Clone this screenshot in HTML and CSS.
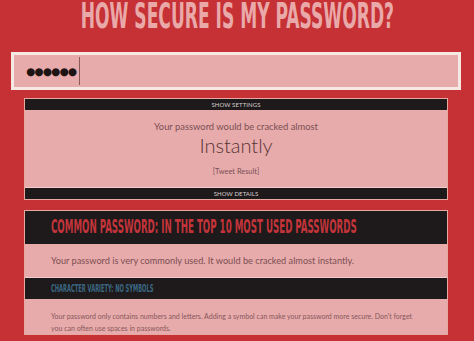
FILE: index.html
```html
<!DOCTYPE html>
<html>
<head>
<meta charset="utf-8">
<link rel="stylesheet" href="styles.css">
</head>
<body>
<h1 class="title"><span class="squeeze">HOW SECURE IS MY PASSWORD?</span></h1>
<div class="pw-box">
  <span class="dots">●●●●●●</span><span class="caret"></span>
</div>
<section class="panel result">
  <div class="bar">SHOW SETTINGS</div>
  <div class="result-body">
    <p class="lead">Your password would be cracked almost</p>
    <p class="time">Instantly</p>
    <p class="tweet">[Tweet Result]</p>
  </div>
  <div class="bar">SHOW DETAILS</div>
</section>
<section class="panel details">
  <h2 class="head-big"><span class="squeeze-left">COMMON PASSWORD: IN THE TOP 10 MOST USED PASSWORDS</span></h2>
  <p class="text-big">Your password is very commonly used. It would be cracked almost instantly.</p>
  <h3 class="head-small"><span class="squeeze-left">CHARACTER VARIETY: NO SYMBOLS</span></h3>
  <p class="text-small">Your password only contains numbers and letters. Adding a symbol can make your password more secure. Don't forget you can often use spaces in passwords.</p>
</section>
</body>
</html>
```
FILE: styles.css
```css
html, body {
  margin: 0;
  padding: 0;
}
body {
  background: #c53135;
  font-family: Lato, "Open Sans", sans-serif;
  width: 474px;
  height: 341px;
  overflow: hidden;
}
.title {
  margin: 0;
  height: 52px;
  display: flex;
  justify-content: center;
  align-items: flex-start;
  font-family: "DejaVu Sans Condensed", "DejaVu Sans", sans-serif;
  font-weight: bold;
  font-size: 22px;
  line-height: 17px;
  color: #eaa9a9;
}
.squeeze {
  display: block;
  flex: none;
  margin-top: 7px;
  transform: scale(0.864, 1.636);
  transform-origin: center;
  white-space: nowrap;
}
.squeeze-left {
  display: block;
  flex: none;
  transform-origin: left center;
  white-space: nowrap;
}
.pw-box {
  margin: 0 13px 0 11px;
  height: 32px;
  border: 3px solid #f6e9e4;
  background: #e8abab;
  display: flex;
  align-items: center;
  padding-left: 12px;
}
.dots {
  font-family: "DejaVu Sans", sans-serif;
  font-size: 10.5px;
  letter-spacing: -0.8px;
  color: #1f1414;
}
.caret {
  width: 1px;
  height: 28px;
  background: #8a5a58;
  margin-left: 3px;
}
.panel {
  margin: 0 26px 0 24px;
  border: 1px solid #e6a8a0;
  background: #e8abab;
}
.result {
  margin-top: 8px;
}
.bar {
  height: 11px;
  background: #1e1a1b;
  color: #d9cfcf;
  font-size: 6px;
  line-height: 11px;
  text-align: center;
  letter-spacing: 0.1px;
}
.result-body {
  height: 77px;
  border-bottom: 1px solid #f2cccc;
  text-align: center;
  color: #7a4f53;
}
.result-body p {
  margin: 0;
}
.lead {
  padding-top: 10px;
  font-size: 9.4px;
  line-height: 13px;
}
.time {
  font-size: 20px;
  line-height: 24px;
  font-weight: 300;
  color: #563436;
}
.tweet {
  padding-top: 10px;
  font-size: 7.4px;
  line-height: 10px;
}
.details {
  margin-top: 10px;
}
.head-big {
  margin: 0;
  height: 33px;
  background: #1e1a1b;
  padding-left: 26px;
  display: flex;
  align-items: center;
  font-family: "DejaVu Sans Condensed", "DejaVu Sans", sans-serif;
  font-weight: bold;
  font-size: 11px;
  line-height: 12px;
  color: #c3343a;
}
.head-big .squeeze-left {
  margin-top: 1px;
  transform: scale(0.877, 1.727);
}
.text-big {
  margin: 0;
  height: 33px;
  padding-left: 26px;
  border-bottom: 1px solid #f2cccc;
  font-size: 9.2px;
  line-height: 33px;
  color: #7b4e52;
}
.head-small {
  margin: 0;
  height: 21px;
  background: #1e1a1b;
  padding-left: 26px;
  display: flex;
  align-items: center;
  font-family: "DejaVu Sans Condensed", "DejaVu Sans", sans-serif;
  font-weight: bold;
  font-size: 11px;
  line-height: 12px;
  color: #3b6883;
}
.head-small .squeeze-left {
  transform: scaleX(0.52);
}
.text-small {
  margin: 0;
  padding: 11px 26px 0 26px;
  font-size: 7px;
  line-height: 12px;
  color: #87575b;
}
```
